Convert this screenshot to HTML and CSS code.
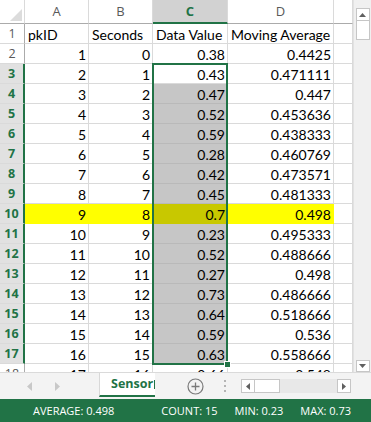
FILE: index.html
```html
<!DOCTYPE html>
<html>
<head>
<meta charset="utf-8">
<link rel="stylesheet" href="styles.css">
</head>
<body>
<div class="app">
  <div class="main">
    <div class="sheet">
      <div class="row hdr">
        <div class="corner"><svg class="tri" width="12" height="12" viewBox="0 0 12 12"><polygon points="12,0 12,12 0,12" fill="#dcdcdc"/></svg></div>
        <div class="ch">A</div><div class="ch">B</div><div class="ch sel">C</div><div class="ch">D</div><div class="ch"></div>
      </div>
      <div class="row"><div class="rh">1</div><div class="c">pkID</div><div class="c">Seconds</div><div class="c">Data Value</div><div class="c">Moving Average</div><div class="c"></div></div>
      <div class="row"><div class="rh">2</div><div class="c n">1</div><div class="c n">0</div><div class="c n">0.38</div><div class="c n">0.4425</div><div class="c"></div></div>
      <div class="row"><div class="rh sel">3</div><div class="c n">2</div><div class="c n">1</div><div class="c n">0.43</div><div class="c n">0.471111</div><div class="c"></div></div>
      <div class="row"><div class="rh sel">4</div><div class="c n">3</div><div class="c n">2</div><div class="c n g">0.47</div><div class="c n">0.447</div><div class="c"></div></div>
      <div class="row"><div class="rh sel">5</div><div class="c n">4</div><div class="c n">3</div><div class="c n g">0.52</div><div class="c n">0.453636</div><div class="c"></div></div>
      <div class="row"><div class="rh sel">6</div><div class="c n">5</div><div class="c n">4</div><div class="c n g">0.59</div><div class="c n">0.438333</div><div class="c"></div></div>
      <div class="row"><div class="rh sel">7</div><div class="c n">6</div><div class="c n">5</div><div class="c n g">0.28</div><div class="c n">0.460769</div><div class="c"></div></div>
      <div class="row"><div class="rh sel">8</div><div class="c n">7</div><div class="c n">6</div><div class="c n g">0.42</div><div class="c n">0.473571</div><div class="c"></div></div>
      <div class="row"><div class="rh sel">9</div><div class="c n">8</div><div class="c n">7</div><div class="c n g">0.45</div><div class="c n">0.481333</div><div class="c"></div></div>
      <div class="row"><div class="rh sel">10</div><div class="c n y">9</div><div class="c n y">8</div><div class="c n o">0.7</div><div class="c n y">0.498</div><div class="c"></div></div>
      <div class="row"><div class="rh sel">11</div><div class="c n">10</div><div class="c n">9</div><div class="c n g">0.23</div><div class="c n">0.495333</div><div class="c"></div></div>
      <div class="row"><div class="rh sel">12</div><div class="c n">11</div><div class="c n">10</div><div class="c n g">0.52</div><div class="c n">0.488666</div><div class="c"></div></div>
      <div class="row"><div class="rh sel">13</div><div class="c n">12</div><div class="c n">11</div><div class="c n g">0.27</div><div class="c n">0.498</div><div class="c"></div></div>
      <div class="row"><div class="rh sel">14</div><div class="c n">13</div><div class="c n">12</div><div class="c n g">0.73</div><div class="c n">0.486666</div><div class="c"></div></div>
      <div class="row"><div class="rh sel">15</div><div class="c n">14</div><div class="c n">13</div><div class="c n g">0.64</div><div class="c n">0.518666</div><div class="c"></div></div>
      <div class="row"><div class="rh sel">16</div><div class="c n">15</div><div class="c n">14</div><div class="c n g">0.59</div><div class="c n">0.536</div><div class="c"></div></div>
      <div class="row"><div class="rh sel">17</div><div class="c n">16</div><div class="c n">15</div><div class="c n g">0.63</div><div class="c n">0.558666</div><div class="c"></div></div>
      <div class="row"><div class="rh">18</div><div class="c n">17</div><div class="c n">16</div><div class="c n">0.66</div><div class="c n">0.548</div><div class="c"></div></div>
      <div class="selection"><span class="handle"></span></div>
    </div>
    <div class="vscroll">
      <div class="sbtn up"><svg width="7" height="4" viewBox="0 0 7 4"><polygon points="0,4 7,4 3.5,0" fill="#606060"/></svg></div>
      <div class="vthumb"></div>
      <div class="vtrack"></div>
      <div class="sbtn down"><svg width="7" height="4" viewBox="0 0 7 4"><polygon points="0,0 7,0 3.5,4" fill="#606060"/></svg></div>
    </div>
  </div>
  <div class="tabbar">
    <div class="nav">
      <svg width="5" height="9" viewBox="0 0 5 9"><polygon points="5,0 5,9 0,4.5" fill="#c8c8c8"/></svg>
      <svg width="5" height="9" viewBox="0 0 5 9"><polygon points="0,0 0,9 5,4.5" fill="#c8c8c8"/></svg>
    </div>
    <div class="tab">Sensor<span class="cut"></span></div>
    <div class="add"><svg width="17" height="17" viewBox="0 0 17 17"><circle cx="8.5" cy="8.5" r="7.5" fill="none" stroke="#7a7a7a" stroke-width="1.2"/><path d="M8.5 4.5v8M4.5 8.5h8" stroke="#7a7a7a" stroke-width="1.3"/></svg></div>
    <div class="dots"><span></span><span></span><span></span></div>
    <div class="hscroll">
      <div class="hbtn"><svg width="4" height="7" viewBox="0 0 4 7"><polygon points="4,0 4,7 0,3.5" fill="#606060"/></svg></div>
      <div class="hthumb"></div>
      <div class="htrack"></div>
      <div class="hbtn"><svg width="4" height="7" viewBox="0 0 4 7"><polygon points="0,0 0,7 4,3.5" fill="#606060"/></svg></div>
    </div>
  </div>
  <div class="status">
    <span class="avg">AVERAGE: 0.498</span>
    <span>COUNT: 15</span>
    <span>MIN: 0.23</span>
    <span>MAX: 0.73</span>
  </div>
</div>
</body>
</html>
```
FILE: styles.css
```css
html, body {
  margin: 0;
  padding: 0;
}
body {
  width: 371px;
  height: 422px;
  overflow: hidden;
  background: #ffffff;
  font-family: Lato, "Liberation Sans", sans-serif;
}
.app {
  display: grid;
  grid-template-rows: 372px 27px 23px;
  height: 422px;
}
.main {
  display: flex;
  overflow: hidden;
}
.sheet {
  position: relative;
  flex: none;
  width: 353px;
  height: 372px;
  overflow: hidden;
}
.row {
  display: grid;
  grid-template-columns: 25px 64px 64px 75px 106px 19px;
  height: 20px;
}
.row > div {
  box-sizing: border-box;
  border-right: 1px solid #dadada;
  border-bottom: 1px solid #dadada;
  overflow: hidden;
  white-space: nowrap;
}
.row.hdr {
  height: 24px;
}
.row.hdr > div {
  border-bottom-color: #ababab;
  color: #595959;
  font-family: "Open Sans", sans-serif;
  font-size: 13px;
  text-align: center;
  line-height: 23px;
}
.corner {
  position: relative;
}
.tri {
  position: absolute;
  right: 2px;
  bottom: 2px;
}
.row.hdr > .ch.sel {
  background: #d2d2d2;
  color: #217346;
  font-weight: bold;
  border-bottom: 2px solid #217346;
}
.row > .rh {
  text-align: center;
  color: #595959;
  font-family: "Open Sans", sans-serif;
  font-size: 12.5px;
  line-height: 19px;
  border-right-color: #ababab;
}
.row > .rh.sel {
  background: #e1e1e1;
  color: #217346;
  font-weight: bold;
  border-right: 2px solid #217346;
}
.c {
  font-size: 14px;
  line-height: 19px;
  padding: 1px 3px 0;
  color: #000000;
}
.c.n {
  text-align: right;
  padding-right: 2px;
}
.row > .c.g {
  background: #c6c6c6;
  border-bottom-color: #b9b9b9;
}
.row > .c.y {
  background: #ffff00;
  border-color: #ffff00;
}
.row > .c.o {
  background: #c8c800;
  border-bottom-color: #c8c800;
}
.selection {
  position: absolute;
  left: 152px;
  top: 63px;
  width: 76px;
  height: 302px;
  box-sizing: border-box;
  border: 2px solid #217346;
  pointer-events: none;
}
.handle {
  position: absolute;
  right: -5px;
  bottom: -5px;
  width: 5px;
  height: 5px;
  background: #217346;
  border: 1px solid #ffffff;
}
.vscroll {
  flex: none;
  width: 18px;
  height: 372px;
  box-sizing: border-box;
  background: #f0f0f0;
  border-left: 1px solid #e2e2e2;
  display: flex;
  flex-direction: column;
  align-items: center;
  padding-top: 8px;
}
.sbtn {
  box-sizing: border-box;
  width: 14px;
  height: 13px;
  background: #ffffff;
  border: 1px solid #c6c6c6;
  display: flex;
  align-items: center;
  justify-content: center;
}
.vthumb {
  box-sizing: border-box;
  width: 14px;
  height: 19px;
  background: #ffffff;
  border: 1px solid #c6c6c6;
  border-top: none;
}
.vtrack {
  flex: 1;
}
.sbtn.down {
  height: 12px;
}
.tabbar {
  display: flex;
  align-items: flex-start;
  background: #f3f3f3;
  border-top: 1px solid #dadada;
  box-sizing: border-box;
}
.nav {
  flex: none;
  width: 99px;
  height: 26px;
  display: flex;
  align-items: center;
  padding-left: 27px;
  gap: 23px;
  box-sizing: border-box;
}
.tab {
  flex: none;
  width: 56px;
  height: 24px;
  box-sizing: border-box;
  background: #ffffff;
  border-left: 1px solid #d8d8d8;
  border-bottom: 2px solid #217346;
  color: #217346;
  font-family: "Open Sans", sans-serif;
  font-weight: bold;
  font-size: 12.5px;
  line-height: 22px;
  padding-left: 11px;
  white-space: nowrap;
  display: flex;
  align-items: center;
}
.cut {
  display: inline-block;
  width: 2px;
  height: 9px;
  margin-left: 1px;
  background: #217346;
}
.add {
  flex: none;
  margin-left: 32px;
  height: 26px;
  display: flex;
  align-items: center;
}
.dots {
  flex: none;
  margin-left: 20px;
  height: 26px;
  display: flex;
  flex-direction: column;
  justify-content: center;
  gap: 3px;
}
.dots span {
  display: block;
  width: 2px;
  height: 2px;
  background: #b4b4b4;
}
.hscroll {
  flex: none;
  margin-left: 15px;
  margin-top: 6px;
  width: 110px;
  height: 14px;
  display: flex;
  background: #e8e8e8;
}
.hbtn {
  box-sizing: border-box;
  width: 14px;
  height: 14px;
  background: #ffffff;
  border: 1px solid #c6c6c6;
  display: flex;
  align-items: center;
  justify-content: center;
}
.hthumb {
  box-sizing: border-box;
  width: 25px;
  height: 14px;
  background: #ffffff;
  border: 1px solid #c6c6c6;
  border-left: none;
}
.htrack {
  flex: 1;
}
.status {
  display: flex;
  align-items: center;
  gap: 17px;
  background: #217346;
  color: #ffffff;
  font-family: "Open Sans", sans-serif;
  font-size: 11px;
  padding: 0 20px 0 33px;
}
.status .avg {
  margin-right: auto;
}
```
